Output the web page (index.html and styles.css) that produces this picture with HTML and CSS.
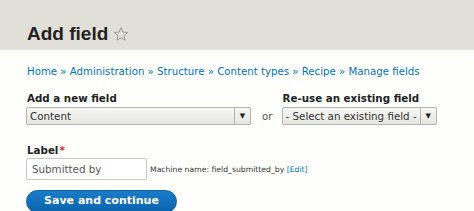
FILE: index.html
```html
<!DOCTYPE html>
<html>
<head>
<meta charset="utf-8">
<link rel="stylesheet" href="styles.css">
</head>
<body>
<header class="page-header">
  <h1 class="title">Add field <svg class="star" width="16" height="16" viewBox="0 0 24 24"><path d="M12 2.5l2.9 6.6 7.1.6-5.4 4.7 1.6 7-6.2-3.7-6.2 3.7 1.6-7L2 9.7l7.1-.6z" fill="none" stroke="#9a9a96" stroke-width="1.5" stroke-linejoin="round"/></svg></h1>
</header>
<main class="content">
  <nav class="breadcrumb"><a>Home</a> » <a>Administration</a> » <a>Structure</a> » <a>Content types</a> » <a>Recipe</a> » <a>Manage fields</a></nav>
  <div class="field-row">
    <div class="group">
      <label class="lbl">Add a new field</label>
      <div class="select wide"><span class="sel-text">Content</span><span class="arrow">▼</span></div>
    </div>
    <span class="or">or</span>
    <div class="group">
      <label class="lbl">Re-use an existing field</label>
      <div class="select"><span class="sel-text">- Select an existing field -</span><span class="arrow">▼</span></div>
    </div>
  </div>
  <div class="label-block">
    <label class="lbl">Label<span class="req">*</span></label>
    <div class="input-row">
      <div class="input">Submitted by</div>
      <span class="machine">Machine name: field_submitted_by <a>[Edit]</a></span>
    </div>
  </div>
  <button class="btn">Save and continue</button>
</main>
</body>
</html>
```
FILE: styles.css
```css
html, body { margin: 0; padding: 0; }
body {
  background: #fefefc;
  font-family: "DejaVu Sans", Verdana, sans-serif;
  color: #333;
  overflow: hidden;
  width: 474px;
  height: 211px;
}
.page-header {
  background: #e0dfd8;
  height: 50px;
  border-bottom: 1px solid #e6e5df;
  box-sizing: border-box;
  padding: 0 0 0 27px;
  display: flex;
  align-items: flex-end;
}
.title {
  margin: 0 0 4px 0;
  font-family: "Liberation Sans", Arial, sans-serif;
  font-weight: bold;
  font-size: 19px;
  line-height: 22px;
  color: #232323;
  display: flex;
  align-items: center;
}
.star { margin-left: 5px; margin-top: -1px; }
.content {
  padding: 15px 0 0 27px;
}
.breadcrumb {
  font-size: 10.2px;
  line-height: 14px;
  color: #0074bd;
}
.breadcrumb a { color: #0074bd; }
.field-row {
  display: flex;
  align-items: flex-end;
  margin-top: 13px;
}
.group { display: flex; flex-direction: column; }
.lbl {
  font-weight: bold;
  font-size: 10.3px;
  line-height: 13px;
  color: #222;
  margin-bottom: 2px;
}
.select {
  display: flex;
  height: 18px;
  box-sizing: border-box;
  border: 1px solid #b4b4b0;
  border-radius: 2px;
  background: linear-gradient(#f6f6f3, #e6e6e1);
  font-size: 10.3px;
  color: #333;
  margin-left: -1px;
}
.select.wide { width: 225px; }
.sel-text { flex: 1; padding: 1px 3px 0 3px; line-height: 15px; white-space: nowrap; }
.arrow {
  width: 15px;
  border-left: 1px solid #b4b4b0;
  font-size: 7px;
  line-height: 16px;
  text-align: center;
  color: #222;
}
.or {
  font-size: 10.3px;
  color: #555;
  margin: 0 10px 3px 11px;
}
.label-block { margin-top: 14px; }
.req { color: #e0202a; margin-left: 1px; }
.input-row { display: flex; align-items: center; }
.input {
  width: 121px;
  height: 22px;
  box-sizing: border-box;
  border: 1px solid #c8c8c4;
  border-radius: 2px;
  background: #fff;
  font-size: 10.3px;
  line-height: 20px;
  padding-left: 5px;
  color: #555;
  margin-left: -1px;
}
.machine {
  font-size: 7.7px;
  color: #333;
  margin-left: 3px;
}
.machine a { color: #0074bd; }
.btn {
  margin: 10px 0 0 -1px;
  width: 151px;
  height: 23px;
  border: 1px solid #0a5ea0;
  border-radius: 12px;
  background: linear-gradient(#1a7cc8, #0a64ad);
  color: #fff;
  font-family: "DejaVu Sans", Verdana, sans-serif;
  font-weight: bold;
  font-size: 11px;
  padding: 0 0 2px 0;
}
```
